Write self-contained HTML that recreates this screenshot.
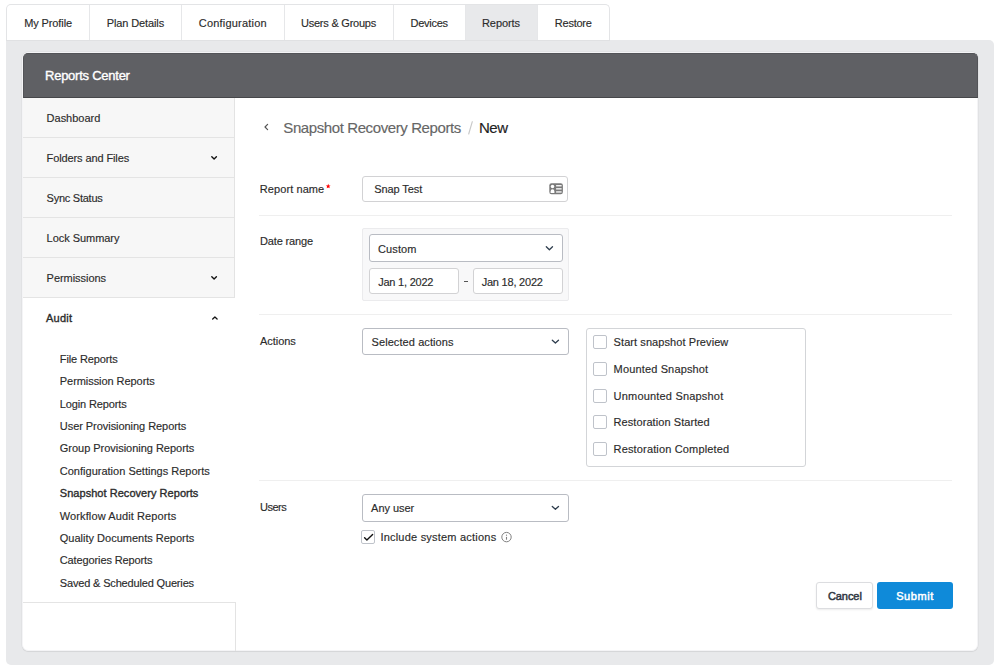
<!DOCTYPE html>
<html><head><meta charset="utf-8">
<style>
*{box-sizing:border-box;margin:0;padding:0}
html,body{width:1000px;height:670px;overflow:hidden;background:#fff}
body{position:relative;font-family:"Liberation Sans",sans-serif;color:#2b2b2b;font-size:11px}
.abs{position:absolute}
.t{position:absolute;white-space:pre;line-height:1}
svg{position:absolute;overflow:visible}
.tabs{position:absolute;left:6px;top:4px;width:604px;height:37px;background:#fff;border:1px solid #e3e4e6;border-bottom:none;border-radius:5px 5px 0 0;overflow:hidden}
.tab{position:absolute;top:0;height:36px;border-right:1px solid #e6e7e9}
.tab.act{background:#e8e9eb}
.panel{position:absolute;left:6px;top:40px;width:988px;height:625px;background:#e8e9eb;border-radius:0 5px 5px 5px}
.card{position:absolute;left:22px;top:52px;width:956px;height:599px;background:#fff;border:1px solid #f4f4f6;border-radius:6px;box-shadow:0 1px 1px rgba(0,0,0,.06),0 0 0 .5px rgba(0,0,0,.05)}
.cin{position:absolute;left:0;top:0;width:954px;height:597px}
.hdr{position:absolute;left:0;top:0;width:955px;height:45px;background:#5f6064;border:1px solid #535458;border-bottom-color:#46474a;border-radius:5px 5px 0 0}
.side{position:absolute;left:0;top:45px;width:212px;height:200px;background:#f7f7f7;border-right:1px solid #e3e3e3}
.row{position:absolute;left:0;width:211px;height:40px;border-bottom:1px solid #e4e4e4}
.sbot{position:absolute;left:0;top:549px;width:213px;height:49px;border-top:1px solid #e4e4e4;border-right:1px solid #e3e3e3}
.sep{position:absolute;left:259px;width:693px;height:1px;background:#efefef}
.inp{position:absolute;background:#fff;border:1px solid #d2d2d4;border-radius:3px}
.sel{position:absolute;background:#fff;border:1px solid #b9bcc3;border-radius:3px}
.cb{position:absolute;width:14px;height:14px;border:1px solid #bfc3ca;border-radius:2px;background:#fff}
</style></head><body>

<div class="tabs">
  <div class="tab" style="left:0;width:83px"></div>
  <div class="tab" style="left:83px;width:92px"></div>
  <div class="tab" style="left:175px;width:103px"></div>
  <div class="tab" style="left:278px;width:109px"></div>
  <div class="tab" style="left:387px;width:72px"></div>
  <div class="tab act" style="left:459px;width:72px"></div>
  <div class="tab" style="left:531px;width:72px;border-right:none"></div>
</div>

<div class="panel"></div>
<div class="abs" style="left:6px;top:40px;width:604px;height:1px;background:#e0e1e3"></div>
<div class="card"><div class="cin">
  <div class="hdr"></div>
  <div class="side">
    <div class="row" style="top:0"></div>
    <div class="row" style="top:40px"></div>
    <div class="row" style="top:80px"></div>
    <div class="row" style="top:120px"></div>
    <div class="row" style="top:160px"></div>
  </div>
  <div class="sbot"></div>
</div></div>

<!-- sidebar chevrons -->
<svg style="left:0;top:0" width="1000" height="670" viewBox="0 0 1000 670">
  <path d="M211.8 156.8 L214.1 159 L216.4 156.8" fill="none" stroke="#111" stroke-width="1.4" stroke-linecap="round" stroke-linejoin="round"/>
  <path d="M211.8 276.8 L214.1 279 L216.4 276.8" fill="none" stroke="#111" stroke-width="1.4" stroke-linecap="round" stroke-linejoin="round"/>
  <path d="M212.7 319 L214.9 317 L217.1 319" fill="none" stroke="#111" stroke-width="1.3" stroke-linecap="round" stroke-linejoin="round"/>
  <!-- back chevron -->
  <path d="M267.6 124.4 L265 127 L267.6 129.6" fill="none" stroke="#555" stroke-width="1.2" stroke-linecap="round" stroke-linejoin="round"/>
</svg>

<!-- form boxes -->
<div class="sep" style="top:215px"></div>
<div class="sep" style="top:314px"></div>
<div class="sep" style="top:480px"></div>

<div class="inp" style="left:362px;top:176px;width:206px;height:26px"></div>
<div class="abs" style="left:362px;top:228px;width:207px;height:73px;background:#f8f8f9;border:1px solid #ebebed;border-radius:2px"></div>
<div class="sel" style="left:369px;top:234px;width:194px;height:28px"></div>
<div class="inp" style="left:369px;top:268px;width:90px;height:26px"></div>
<div class="inp" style="left:473px;top:268px;width:90px;height:26px"></div>
<div class="abs" style="left:464px;top:281px;width:4px;height:1px;background:#555"></div>

<div class="sel" style="left:362px;top:328px;width:207px;height:27px"></div>
<div class="abs" style="left:586px;top:328px;width:220px;height:139px;border:1px solid #d3d5d8;border-radius:3px"></div>
<div class="cb" style="left:593px;top:335px"></div>
<div class="cb" style="left:593px;top:362px"></div>
<div class="cb" style="left:593px;top:389px"></div>
<div class="cb" style="left:593px;top:415px"></div>
<div class="cb" style="left:593px;top:442px"></div>

<div class="sel" style="left:362px;top:494px;width:207px;height:28px"></div>
<div class="cb" style="left:361px;top:530px"></div>

<div class="abs" style="left:816px;top:582px;width:57px;height:27px;border:1px solid #dcdde0;border-radius:3px;background:#fff;box-shadow:0 1px 2px rgba(0,0,0,.08)"></div>
<div class="abs" style="left:877px;top:582px;width:76px;height:27px;border-radius:3px;background:#0f8ad9"></div>

<svg style="left:0;top:0" width="1000" height="670" viewBox="0 0 1000 670">
  <!-- id card icon -->
  <rect x="549.3" y="183.2" width="13.6" height="11" rx="2.2" fill="#7a7a7a"/>
  <circle cx="552.5" cy="186.5" r="1.75" fill="#fff"/>
  <path d="M550.6 193 L550.6 191.6 Q550.6 189.2 552.5 189.2 Q554.4 189.2 554.4 191.6 L554.4 193 Z" fill="#fff"/>
  <rect x="556.1" y="185.1" width="5.5" height="1.3" fill="#fff"/>
  <rect x="556.1" y="188.2" width="5.5" height="1.3" fill="#fff"/>
  <rect x="556.1" y="191.3" width="5.5" height="1.3" fill="#fff"/>
  <!-- select chevrons -->
  <path d="M546.3 246.8 L549.4 249.8 L552.5 246.8" fill="none" stroke="#2f3e4e" stroke-width="1.3" stroke-linecap="round" stroke-linejoin="round"/>
  <path d="M552.3 340.3 L555.4 343.1 L558.5 340.3" fill="none" stroke="#2f3e4e" stroke-width="1.3" stroke-linecap="round" stroke-linejoin="round"/>
  <path d="M552.3 506.5 L555.4 509.3 L558.5 506.5" fill="none" stroke="#2f3e4e" stroke-width="1.3" stroke-linecap="round" stroke-linejoin="round"/>
  <!-- check -->
  <path d="M364.6 537.8 L366.9 540 L372.6 534.4" fill="none" stroke="#111" stroke-width="1.4" stroke-linecap="round" stroke-linejoin="round"/>
  <!-- info -->
  <circle cx="506.5" cy="537.1" r="4.7" fill="none" stroke="#808080" stroke-width="1"/>
  <rect x="505.95" y="536.9" width="1.1" height="2.8" fill="#808080"/>
  <circle cx="506.5" cy="535.2" r="0.6" fill="#808080"/>
  <path d="M468.7 134 L472.3 121.7" stroke="#c9c9c9" stroke-width="1.15" stroke-linecap="round"/>
  <!-- asterisk -->
  <path d="M328.2 183.8 L328.9 185.4 L330.6 185.5 L329.3 186.6 L329.7 188.3 L328.2 187.4 L326.7 188.3 L327.1 186.6 L325.8 185.5 L327.5 185.4 Z" fill="#f00"/>
</svg>

<div class="t" style="left:24.2px;top:18px;letter-spacing:-0.111px;color:#2b2b2b;-webkit-text-stroke:0.15px #2b2b2b">My Profile</div>
<div class="t" style="left:106.8px;top:18px;letter-spacing:-0.118px;color:#2b2b2b;-webkit-text-stroke:0.15px #2b2b2b">Plan Details</div>
<div class="t" style="left:198.8px;top:18px;letter-spacing:0.2px;color:#2b2b2b;-webkit-text-stroke:0.15px #2b2b2b">Configuration</div>
<div class="t" style="left:301.0px;top:18px;letter-spacing:-0.231px;color:#2b2b2b;-webkit-text-stroke:0.15px #2b2b2b">Users &amp; Groups</div>
<div class="t" style="left:410.6px;top:18px;letter-spacing:-0.283px;color:#2b2b2b;-webkit-text-stroke:0.15px #2b2b2b">Devices</div>
<div class="t" style="left:482.0px;top:18px;letter-spacing:-0.083px;color:#2b2b2b;-webkit-text-stroke:0.15px #2b2b2b">Reports</div>
<div class="t" style="left:554.8px;top:18px;letter-spacing:-0.233px;color:#2b2b2b;-webkit-text-stroke:0.15px #2b2b2b">Restore</div>
<div class="t" style="left:45.0px;top:69px;letter-spacing:-0.246px;color:#fff;font-size:13px;-webkit-text-stroke:0.35px #fff">Reports Center</div>
<div class="t" style="left:46.6px;top:113px;letter-spacing:-0.012px;color:#2b2b2b;-webkit-text-stroke:0.15px #2b2b2b">Dashboard</div>
<div class="t" style="left:46.6px;top:153px;letter-spacing:-0.112px;color:#2b2b2b;-webkit-text-stroke:0.15px #2b2b2b">Folders and Files</div>
<div class="t" style="left:46.6px;top:193px;letter-spacing:-0.25px;color:#2b2b2b;-webkit-text-stroke:0.15px #2b2b2b">Sync Status</div>
<div class="t" style="left:46.6px;top:233px;letter-spacing:-0.045px;color:#2b2b2b;-webkit-text-stroke:0.15px #2b2b2b">Lock Summary</div>
<div class="t" style="left:46.6px;top:273px;letter-spacing:-0.04px;color:#2b2b2b;-webkit-text-stroke:0.15px #2b2b2b">Permissions</div>
<div class="t" style="left:46.0px;top:313px;letter-spacing:0.25px;color:#2b2b2b;-webkit-text-stroke:0.35px #2b2b2b">Audit</div>
<div class="t" style="left:59.8px;top:354px;letter-spacing:-0.118px;color:#2b2b2b;-webkit-text-stroke:0.15px #2b2b2b">File Reports</div>
<div class="t" style="left:59.8px;top:376px;letter-spacing:-0.059px;color:#2b2b2b;-webkit-text-stroke:0.15px #2b2b2b">Permission Reports</div>
<div class="t" style="left:59.8px;top:399px;letter-spacing:-0.125px;color:#2b2b2b;-webkit-text-stroke:0.15px #2b2b2b">Login Reports</div>
<div class="t" style="left:59.8px;top:421px;letter-spacing:-0.05px;color:#2b2b2b;-webkit-text-stroke:0.15px #2b2b2b">User Provisioning Reports</div>
<div class="t" style="left:59.8px;top:443px;letter-spacing:-0.024px;color:#2b2b2b;-webkit-text-stroke:0.15px #2b2b2b">Group Provisioning Reports</div>
<div class="t" style="left:59.8px;top:466px;letter-spacing:0.007px;color:#2b2b2b;-webkit-text-stroke:0.15px #2b2b2b">Configuration Settings Reports</div>
<div class="t" style="left:59.8px;top:488px;letter-spacing:0.042px;color:#2b2b2b;-webkit-text-stroke:0.35px #2b2b2b">Snapshot Recovery Reports</div>
<div class="t" style="left:59.8px;top:511px;letter-spacing:0.11px;color:#2b2b2b;-webkit-text-stroke:0.15px #2b2b2b">Workflow Audit Reports</div>
<div class="t" style="left:59.8px;top:533px;letter-spacing:0.0px;color:#2b2b2b;-webkit-text-stroke:0.15px #2b2b2b">Quality Documents Reports</div>
<div class="t" style="left:59.8px;top:555px;letter-spacing:-0.124px;color:#2b2b2b;-webkit-text-stroke:0.15px #2b2b2b">Categories Reports</div>
<div class="t" style="left:59.8px;top:578px;letter-spacing:-0.163px;color:#2b2b2b;-webkit-text-stroke:0.15px #2b2b2b">Saved &amp; Scheduled Queries</div>
<div class="t" style="left:283.3px;top:120px;letter-spacing:-0.4px;color:#666;font-size:15px;-webkit-text-stroke:0.15px #666">Snapshot Recovery Reports</div>
<div class="t" style="left:479.0px;top:120px;letter-spacing:-0.5px;color:#222;font-size:15px;-webkit-text-stroke:0.15px #222">New</div>
<div class="t" style="left:259.8px;top:184px;letter-spacing:0.08px;color:#2b2b2b;-webkit-text-stroke:0.15px #2b2b2b">Report name</div>
<div class="t" style="left:374.3px;top:184px;letter-spacing:-0.1px;color:#2b2b2b;-webkit-text-stroke:0.15px #2b2b2b">Snap Test</div>
<div class="t" style="left:260.0px;top:236px;letter-spacing:-0.156px;color:#2b2b2b;-webkit-text-stroke:0.15px #2b2b2b">Date range</div>
<div class="t" style="left:378.0px;top:244px;letter-spacing:0.12px;color:#2b2b2b;-webkit-text-stroke:0.15px #2b2b2b">Custom</div>
<div class="t" style="left:378.2px;top:277px;letter-spacing:-0.22px;color:#2b2b2b;-webkit-text-stroke:0.15px #2b2b2b">Jan 1, 2022</div>
<div class="t" style="left:481.7px;top:277px;letter-spacing:-0.218px;color:#2b2b2b;-webkit-text-stroke:0.15px #2b2b2b">Jan 18, 2022</div>
<div class="t" style="left:259.9px;top:336px;letter-spacing:-0.017px;color:#2b2b2b;-webkit-text-stroke:0.15px #2b2b2b">Actions</div>
<div class="t" style="left:371.5px;top:337px;letter-spacing:0.087px;color:#2b2b2b;-webkit-text-stroke:0.15px #2b2b2b">Selected actions</div>
<div class="t" style="left:613.6px;top:337px;letter-spacing:0.076px;color:#2b2b2b;-webkit-text-stroke:0.15px #2b2b2b">Start snapshot Preview</div>
<div class="t" style="left:613.6px;top:364px;letter-spacing:0.147px;color:#2b2b2b;-webkit-text-stroke:0.15px #2b2b2b">Mounted Snapshot</div>
<div class="t" style="left:613.6px;top:391px;letter-spacing:0.188px;color:#2b2b2b;-webkit-text-stroke:0.15px #2b2b2b">Unmounted Snapshot</div>
<div class="t" style="left:613.6px;top:417px;letter-spacing:0.072px;color:#2b2b2b;-webkit-text-stroke:0.15px #2b2b2b">Restoration Started</div>
<div class="t" style="left:613.6px;top:444px;letter-spacing:0.15px;color:#2b2b2b;-webkit-text-stroke:0.15px #2b2b2b">Restoration Completed</div>
<div class="t" style="left:259.9px;top:502px;letter-spacing:-0.45px;color:#2b2b2b;-webkit-text-stroke:0.15px #2b2b2b">Users</div>
<div class="t" style="left:371.1px;top:503px;letter-spacing:-0.043px;color:#2b2b2b;-webkit-text-stroke:0.15px #2b2b2b">Any user</div>
<div class="t" style="left:380.4px;top:532px;letter-spacing:0.214px;color:#2b2b2b;-webkit-text-stroke:0.15px #2b2b2b">Include system actions</div>
<div class="t" style="left:827.9px;top:591px;letter-spacing:-0.06px;color:#333a44;-webkit-text-stroke:0.5px #333a44">Cancel</div>
<div class="t" style="left:896.2px;top:591px;letter-spacing:0.56px;color:#fff;-webkit-text-stroke:0.5px #fff">Submit</div>

</body></html>
